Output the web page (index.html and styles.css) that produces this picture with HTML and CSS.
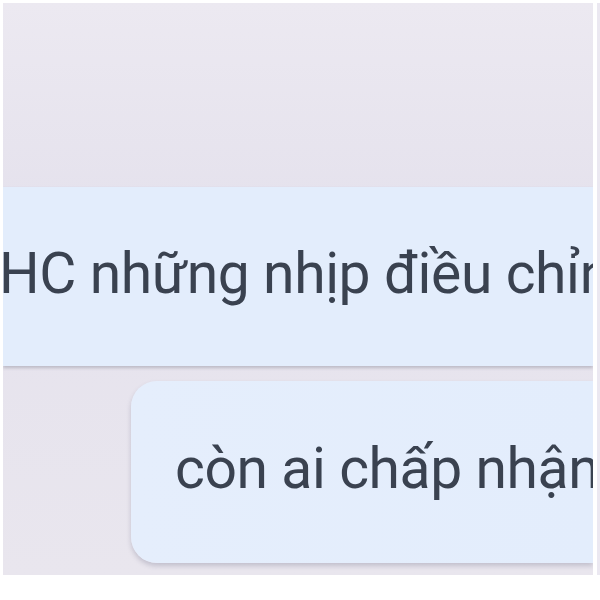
FILE: index.html
```html
<!DOCTYPE html>
<html lang="vi">
<head>
  <meta charset="UTF-8" />
  <meta name="viewport" content="width=device-width, initial-scale=1.0"/>
  <title>Chat</title>
  <link rel="stylesheet" href="styles.css">
</head>
<body>
  <div class="frame">
    <div class="panel">
      <div class="header-space"></div>
      <div class="bubble incoming">
        <span class="text">HC những nhịp điều chỉnh</span>
      </div>
      <div class="bubble outgoing">
        <span class="text">còn ai chấp nhận</span>
      </div>
    </div>
    <div class="edge"></div>
  </div>
</body>
</html>
```

FILE: styles.css
```css
body {
  margin: 0;
  background: #fff;
  font-family: Roboto, 'Noto Sans', sans-serif;
}
.frame {
  display: flex;
  gap: 4px;
  height: 600px;
  padding: 3px 0 0 3px;
  box-sizing: border-box;
}
.panel {
  width: 590px;
  height: 572px;
  overflow: hidden;
  display: flex;
  flex-direction: column;
  background: linear-gradient(180deg, #ece9f1 0%, #e5e2ed 35%, #e9e6ee 100%);
}
.edge {
  flex: 1;
  height: 572px;
  background: #ebe8f1;
}
.header-space {
  height: 184px;
  flex-shrink: 0;
}
.bubble {
  flex-shrink: 0;
  display: flex;
  align-items: center;
  box-sizing: border-box;
  padding-bottom: 7px;
  background: #e3edfc;
  color: #3a4250;
  font-size: 57px;
  line-height: 1;
  letter-spacing: -0.4px;
  white-space: nowrap;
}
.incoming {
  height: 179px;
  box-shadow: 0 2px 3px rgba(60, 60, 80, 0.25);
}
.incoming .text {
  margin-left: -4px;
}
.outgoing {
  height: 182px;
  margin: 15px 0 0 128px;
  padding-left: 44px;
  border-radius: 26px 0 0 26px;
  background: linear-gradient(90deg, #e5eefc, #e3edfc);
  box-shadow: 0 3px 5px rgba(60, 60, 90, 0.22);
}
```
